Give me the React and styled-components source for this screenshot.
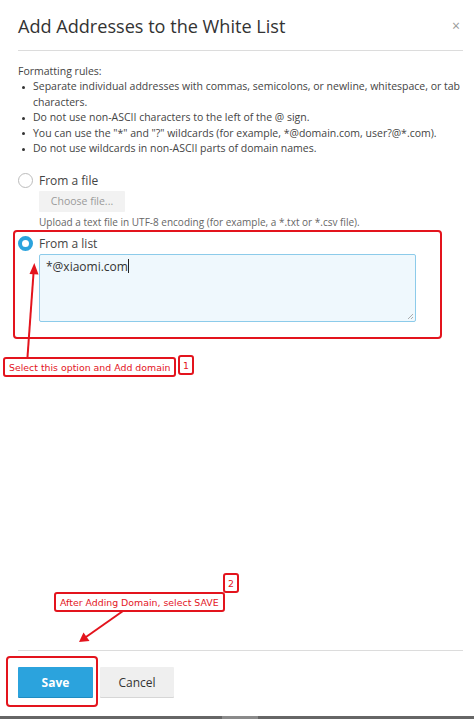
import React from "react";
import styled, { createGlobalStyle } from "styled-components";

const Global = createGlobalStyle`
  html, body { margin: 0; padding: 0; background: #fff; }
  body { font-family: "Open Sans", "Liberation Sans", sans-serif; color: #333; }
  * { box-sizing: border-box; }
`;

const RED = "#e3141d";
const BLUE = "#2ba3dd";

const Page = styled.div`
  position: relative;
  width: 474px;
  height: 719px;
  overflow: hidden;
  display: flex;
  flex-direction: column;
  background: #fff;
`;

const Header = styled.div`
  height: 51px;
  margin: 0 11px 0 18px;
  border-bottom: 1px solid #dcdcdc;
  display: flex;
  align-items: center;
  justify-content: space-between;
`;

const Title = styled.h1`
  margin: 0;
  font-size: 18.1px;
  font-weight: 400;
  color: #333;
  padding-top: 2px;
`;

const Close = styled.span`
  font-size: 14px;
  color: #999;
  margin-right: 3px;
  padding-top: 2px;
  line-height: 1;
`;

const Content = styled.div`
  padding: 13px 5px 0 18px;
  font-size: 10.5px;
  line-height: 15.4px;
  color: #444;
`;

const RulesTitle = styled.div``;

const Rules = styled.ul`
  margin: 0;
  padding: 0 0 0 15px;
  list-style: none;
`;

const Rule = styled.li`
  position: relative;
  &::before {
    content: "";
    position: absolute;
    left: -11px;
    top: 6.5px;
    width: 3px;
    height: 3px;
    border-radius: 50%;
    background: #333;
  }
`;

const Option = styled.div`
  margin-top: ${(p) => p.$top}px;
`;

const RadioRow = styled.label`
  display: flex;
  align-items: center;
  gap: 6px;
  height: 16px;
  font-size: 12px;
  color: #444;
`;

const Radio = styled.span`
  width: 15px;
  height: 15px;
  border-radius: 50%;
  flex: none;
  border: ${(p) => (p.$checked ? `4.5px solid ${BLUE}` : "1px solid #bcbcbc")};
  background: #fff;
`;

const Indented = styled.div`
  padding-left: 21px;
`;

const ChooseButton = styled.div`
  margin-top: 3px;
  width: 86px;
  height: 21px;
  background: #f2f2f2;
  color: #9a9a9a;
  font-size: 10.5px;
  display: flex;
  align-items: center;
  justify-content: center;
  border-radius: 1px;
`;

const Hint = styled.div`
  margin-top: 3px;
  font-size: 10px;
  color: #666;
`;

const TextArea = styled.div`
  position: relative;
  margin-top: 2px;
  width: 377px;
  height: 68px;
  background: #eff8fd;
  border: 1px solid #8ccbea;
  border-radius: 2px;
  padding: 3px 6px;
  font-size: 12px;
  line-height: 17px;
  color: #333;
`;

const Caret = styled.span`
  display: inline-block;
  width: 1px;
  height: 14px;
  background: #222;
  vertical-align: -2px;
`;

const Grip = styled.svg`
  position: absolute;
  right: 1px;
  bottom: 1px;
`;

const Footer = styled.div`
  margin: auto 11px 0 18px;
  border-top: 1px solid #dcdcdc;
  padding: 16px 0 19px;
  display: flex;
  gap: 7px;
`;

const Button = styled.button`
  width: ${(p) => p.$w}px;
  height: 30px;
  border: none;
  border-radius: 1px;
  font-family: "Open Sans", "Liberation Sans", sans-serif;
  font-size: 12px;
  font-weight: ${(p) => (p.$primary ? 700 : 400)};
  color: ${(p) => (p.$primary ? "#fff" : "#333")};
  background: ${(p) => (p.$primary ? BLUE : "#efefef")};
  box-shadow: ${(p) => (p.$primary ? "0 1px 0 #1f8cc2" : "0 1px 0 #d6d6d6")};
  padding: 0;
`;

const ScrollTrack = styled.div`
  height: 3px;
  background: #666;
  position: relative;
  flex: none;
`;

const ScrollThumb = styled.div`
  position: absolute;
  left: 222px;
  width: 36px;
  top: 0;
  bottom: 0;
  background: #8a8a8a;
`;

/* ---- annotation overlay ---- */
const Frame = styled.div`
  position: absolute;
  left: ${(p) => p.$x}px;
  top: ${(p) => p.$y}px;
  width: ${(p) => p.$w}px;
  height: ${(p) => p.$h}px;
  border: 2px solid ${RED};
  border-radius: 4px;
  pointer-events: none;
`;

const Callout = styled.div`
  position: absolute;
  left: ${(p) => p.$x}px;
  top: ${(p) => p.$y}px;
  height: 20px;
  padding: 0 4px;
  border: 2px solid ${RED};
  border-radius: 3px;
  background: #fff;
  color: ${RED};
  font-family: "DejaVu Sans", Verdana, sans-serif;
  font-size: 9.4px;
  display: flex;
  align-items: center;
  white-space: nowrap;
`;

const Badge = styled(Callout)`
  width: 16px;
  padding: 0;
  justify-content: center;
  font-size: 9.4px;
`;

const Arrows = styled.svg`
  position: absolute;
  left: 0;
  top: 0;
  pointer-events: none;
`;

export default function App() {
  return (
    <Page>
      <Global />
      <Header>
        <Title>Add Addresses to the White List</Title>
        <Close>×</Close>
      </Header>
      <Content>
        <RulesTitle>Formatting rules:</RulesTitle>
        <Rules>
          <Rule>
            Separate individual addresses with commas, semicolons, or newline, whitespace, or tab
            characters.
          </Rule>
          <Rule>Do not use non-ASCII characters to the left of the @ sign.</Rule>
          <Rule>You can use the "*" and "?" wildcards (for example, *@domain.com, user?@*.com).</Rule>
          <Rule>Do not use wildcards in non-ASCII parts of domain names.</Rule>
        </Rules>

        <Option $top={16}>
          <RadioRow>
            <Radio />
            From a file
          </RadioRow>
          <Indented>
            <ChooseButton>Choose file...</ChooseButton>
            <Hint>Upload a text file in UTF-8 encoding (for example, a *.txt or *.csv file).</Hint>
          </Indented>
        </Option>

        <Option $top={5}>
          <RadioRow>
            <Radio $checked />
            From a list
          </RadioRow>
          <Indented>
            <TextArea>
              *@xiaomi.com<Caret />
              <Grip width="7" height="7" viewBox="0 0 7 7">
                <path d="M6 1L1 6M6 4L4 6" stroke="#999" strokeWidth="0.8" />
              </Grip>
            </TextArea>
          </Indented>
        </Option>
      </Content>

      <Footer>
        <Button $primary $w={75}>Save</Button>
        <Button $w={74}>Cancel</Button>
      </Footer>
      <ScrollTrack>
        <ScrollThumb />
      </ScrollTrack>

      <Frame $x={13} $y={230} $w={429} $h={109} />
      <Frame $x={6} $y={656} $w={92} $h={51} />
      <Callout $x={3} $y={357}>Select this option and Add domain</Callout>
      <Badge $x={178} $y={355}>1</Badge>
      <Callout $x={54} $y={592}>After Adding Domain, select SAVE</Callout>
      <Badge $x={223} $y={573}>2</Badge>

      <Arrows width="474" height="719" viewBox="0 0 474 719">
        <line x1="27.5" y1="357" x2="33.6" y2="272" stroke={RED} strokeWidth="2" />
        <polygon points="34.3,263 29.5,274 38.5,274.6" fill={RED} />
        <line x1="123" y1="611" x2="86" y2="637" stroke={RED} strokeWidth="2" />
        <polygon points="79,642 83.5,632.5 89.5,641" fill={RED} />
      </Arrows>
    </Page>
  );
}
